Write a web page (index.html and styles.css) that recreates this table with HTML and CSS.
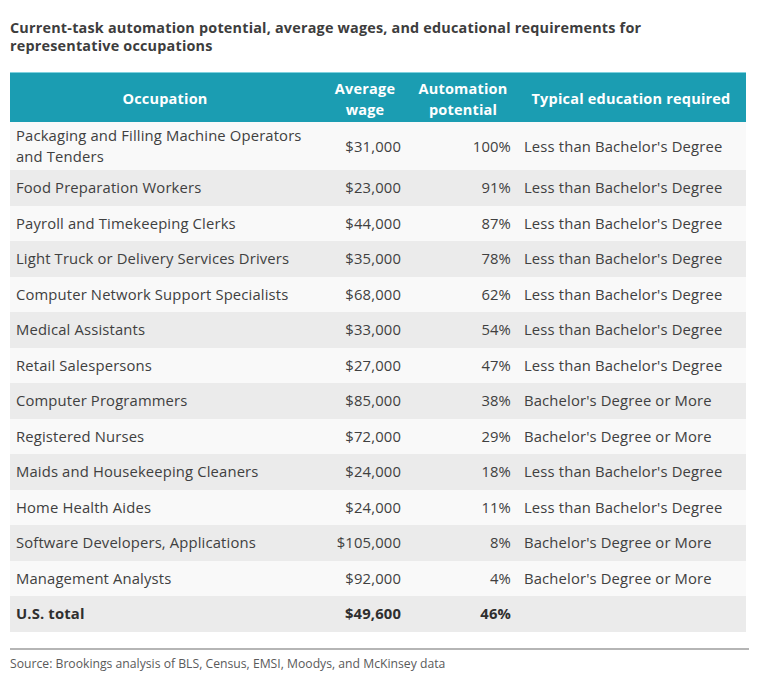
FILE: index.html
```html
<!DOCTYPE html>
<html>
<head>
<meta charset="utf-8">
<link rel="stylesheet" href="styles.css">
</head>
<body>
<div class="page">
  <h1 class="title">Current-task automation potential, average wages, and educational requirements for representative occupations</h1>
  <table class="data">
    <colgroup>
      <col class="c-occ"><col class="c-wage"><col class="c-auto"><col class="c-edu">
    </colgroup>
    <thead>
      <tr>
        <th>Occupation</th>
        <th>Average<br>wage</th>
        <th>Automation<br>potential</th>
        <th>Typical education required</th>
      </tr>
    </thead>
    <tbody>
      <tr class="tall"><td class="occ">Packaging and Filling Machine Operators and Tenders</td><td class="num">$31,000</td><td class="pct">100%</td><td class="edu">Less than Bachelor's Degree</td></tr>
      <tr><td class="occ">Food Preparation Workers</td><td class="num">$23,000</td><td class="pct">91%</td><td class="edu">Less than Bachelor's Degree</td></tr>
      <tr><td class="occ">Payroll and Timekeeping Clerks</td><td class="num">$44,000</td><td class="pct">87%</td><td class="edu">Less than Bachelor's Degree</td></tr>
      <tr><td class="occ">Light Truck or Delivery Services Drivers</td><td class="num">$35,000</td><td class="pct">78%</td><td class="edu">Less than Bachelor's Degree</td></tr>
      <tr><td class="occ">Computer Network Support Specialists</td><td class="num">$68,000</td><td class="pct">62%</td><td class="edu">Less than Bachelor's Degree</td></tr>
      <tr><td class="occ">Medical Assistants</td><td class="num">$33,000</td><td class="pct">54%</td><td class="edu">Less than Bachelor's Degree</td></tr>
      <tr><td class="occ">Retail Salespersons</td><td class="num">$27,000</td><td class="pct">47%</td><td class="edu">Less than Bachelor's Degree</td></tr>
      <tr><td class="occ">Computer Programmers</td><td class="num">$85,000</td><td class="pct">38%</td><td class="edu">Bachelor's Degree or More</td></tr>
      <tr><td class="occ">Registered Nurses</td><td class="num">$72,000</td><td class="pct">29%</td><td class="edu">Bachelor's Degree or More</td></tr>
      <tr><td class="occ">Maids and Housekeeping Cleaners</td><td class="num">$24,000</td><td class="pct">18%</td><td class="edu">Less than Bachelor's Degree</td></tr>
      <tr><td class="occ">Home Health Aides</td><td class="num">$24,000</td><td class="pct">11%</td><td class="edu">Less than Bachelor's Degree</td></tr>
      <tr><td class="occ">Software Developers, Applications</td><td class="num">$105,000</td><td class="pct">8%</td><td class="edu">Bachelor's Degree or More</td></tr>
      <tr><td class="occ">Management Analysts</td><td class="num">$92,000</td><td class="pct">4%</td><td class="edu">Bachelor's Degree or More</td></tr>
      <tr class="total"><td class="occ">U.S. total</td><td class="num">$49,600</td><td class="pct">46%</td><td class="edu"></td></tr>
    </tbody>
  </table>
  <div class="rule"></div>
  <p class="source">Source: Brookings analysis of BLS, Census, EMSI, Moodys, and McKinsey data</p>
</div>
</body>
</html>
```

FILE: styles.css
```css
html, body {
  margin: 0;
  padding: 0;
  background: #ffffff;
}
body {
  font-family: "Open Sans", "Noto Sans", sans-serif;
  color: #3c3c3c;
}
.page {
  padding: 19px 0 0 10px;
  width: 739px;
}
.title {
  margin: 0;
  font-size: 14.4px;
  font-weight: 700;
  letter-spacing: 0.2px;
  line-height: 18px;
  color: #3d3d3d;
  width: 680px;
}
.data {
  margin-top: 17px;
  border-collapse: collapse;
  table-layout: fixed;
  width: 736px;
  font-size: 14.8px;
  letter-spacing: 0.15px;
}
.c-occ { width: 310px; }
.c-wage { width: 90px; }
.c-auto { width: 106px; }
.c-edu { width: 230px; }
.data thead th {
  background: #1b9db2;
  color: #ffffff;
  font-weight: 700;
  font-size: 14.5px;
  letter-spacing: 0.2px;
  line-height: 21px;
  height: 47px;
  padding: 2px 0 0 0;
  text-align: center;
  vertical-align: middle;
}
.data thead tr {
  border-top: 1px solid #7fd1de;
}
.data tbody tr {
  height: 35.5px;
  background: #f9f9f9;
}
.data tbody tr:nth-child(even) {
  background: #ebebeb;
}
.data tbody tr.tall {
  height: 48px;
}
.data tbody tr.tall .occ {
  line-height: 21px;
}
.data td {
  padding: 0;
  vertical-align: middle;
  line-height: 19px;
  color: #404040;
}
.occ {
  padding-left: 6px !important;
}
.num {
  text-align: right;
  padding-right: 9px !important;
}
.pct {
  text-align: right;
  padding-right: 5px !important;
}
.edu {
  padding-left: 8px !important;
  white-space: nowrap;
}
.data tbody tr.total td {
  font-weight: 700;
  color: #2f2f2f;
}
.rule {
  margin-top: 16px;
  height: 2px;
  background: #b5b5b5;
  width: 739px;
}
.source {
  margin: 6px 0 0 0;
  font-size: 12.2px;
  color: #5a5a5a;
  line-height: 16px;
}
```
